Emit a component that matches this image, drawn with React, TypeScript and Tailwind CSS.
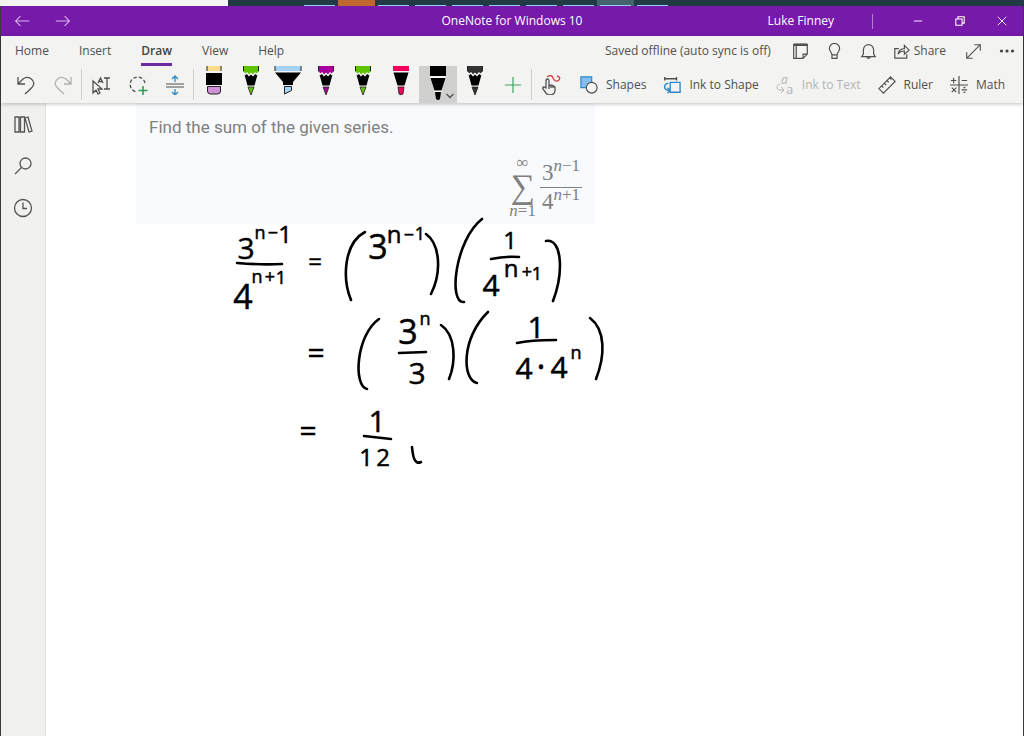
import React, { useState } from "react";

type Glyph = { t: string; x: number; y: number; size: number };

type PenKind = "eraser" | "pencil" | "brush" | "marker";

type Pen = { name: string; kind: PenKind; color: string };

const TABS = ["Home", "Insert", "Draw", "View", "Help"];

const PENS: Pen[] = [
    { name: "Eraser", kind: "eraser", color: "#cf8fd6" },
    { name: "Green pencil", kind: "pencil", color: "#5fc400" },
    { name: "Highlighter", kind: "brush", color: "#a5d3f7" },
    { name: "Purple pencil", kind: "pencil", color: "#a8009a" },
    { name: "Lime pencil", kind: "pencil", color: "#5fc400" },
    { name: "Pink pen", kind: "marker", color: "#f5005c" },
    { name: "Black pen", kind: "marker", color: "#000000" },
    { name: "Gray pencil", kind: "pencil", color: "#333333" },
];

// x is the centre of the character, y its baseline
const NOTES: Glyph[] = [
    { t: "3", x: 246, y: 259, size: 30 },
    { t: "n", x: 260, y: 239, size: 18 },
    { t: "−", x: 273, y: 239, size: 18 },
    { t: "1", x: 285, y: 243, size: 24 },
    { t: "4", x: 243, y: 309, size: 34 },
    { t: "n", x: 257, y: 283, size: 18 },
    { t: "+", x: 270, y: 283, size: 18 },
    { t: "1", x: 281, y: 284, size: 18 },
    { t: "=", x: 315, y: 270, size: 24 },
    { t: "3", x: 378, y: 259, size: 34 },
    { t: "n", x: 394, y: 243, size: 24 },
    { t: "−", x: 409, y: 241, size: 18 },
    { t: "1", x: 420, y: 240, size: 18 },
    { t: "1", x: 510, y: 249, size: 24 },
    { t: "4", x: 491, y: 296, size: 30 },
    { t: "n", x: 511, y: 277, size: 24 },
    { t: "+", x: 527, y: 278, size: 18 },
    { t: "1", x: 537, y: 280, size: 18 },
    { t: "=", x: 316, y: 363, size: 30 },
    { t: "3", x: 408, y: 344, size: 34 },
    { t: "n", x: 425, y: 325, size: 18 },
    { t: "3", x: 417, y: 384, size: 30 },
    { t: "1", x: 536, y: 338, size: 30 },
    { t: "4", x: 524, y: 379, size: 30 },
    { t: "·", x: 541, y: 379, size: 34 },
    { t: "4", x: 559, y: 378, size: 30 },
    { t: "n", x: 576, y: 359, size: 18 },
    { t: "=", x: 308, y: 441, size: 30 },
    { t: "1", x: 377, y: 432, size: 30 },
    { t: "1", x: 366, y: 466, size: 24 },
    { t: "2", x: 383, y: 466, size: 24 },
];

// brackets, fraction bars and the stroke still being drawn
const STROKES = [
    "M237 263Q260 265 282 264",
    "M365 232C344 243 342 278 351 300",
    "M426 234C440 244 442 272 431 294",
    "M482 219C455 240 448 304 464 302",
    "M491 259Q505 256 519 257",
    "M546 241C562 238 564 272 553 301",
    "M379 319C356 335 353 386 367 389",
    "M399 353L426 352",
    "M441 325C456 335 456 362 449 379",
    "M488 312C461 338 462 380 477 383",
    "M517 343Q530 340 556 340",
    "M590 318C606 330 605 356 596 379",
    "M364 436L391 439",
    "M412 447C413 458 415 465 421 462",
];

function Line({ children, size = 20, w = 1.3, className = "" }: { children: React.ReactNode; size?: number; w?: number; className?: string }) {
    return (
        <svg width={size} height={size} viewBox="0 0 20 20" fill="none" stroke="currentColor" strokeWidth={w} className={"shrink-0 " + className} aria-hidden="true">
            {children}
        </svg>
    );
}

function PenIcon({ kind, color }: { kind: PenKind; color: string }) {
    if (kind === "eraser") {
        return (
            <svg width="16" height="30" viewBox="0 0 16 30" aria-hidden="true">
                <rect x="1" y="0" width="14" height="5" fill="#f7dc8b" />
                <path d="M1 0V5M15 0V5" stroke="#222" />
                <rect x="0" y="7" width="16" height="12" fill="#000" />
                <path d="M1.500 20.500H14.500V25Q14.500 28 11.500 28H4.500Q1.500 28 1.500 25Z" fill={color} stroke="#222" />
            </svg>
        );
    }
    if (kind === "brush") {
        return (
            <svg width="28" height="30" viewBox="0 0 28 30" aria-hidden="true">
                <rect x="1" y="0" width="26" height="5" fill={color} />
                <path d="M1 0V5M27 0V5" stroke="#222" />
                <path d="M1 6.500H27L19 16V19H9V16Z" fill="#000" />
                <path d="M10.500 20.500H17.500V24.500L10.500 28Z" fill={color} stroke="#222" />
            </svg>
        );
    }
    if (kind === "pencil") {
        return (
            <svg width="16" height="30" viewBox="0 0 16 30" aria-hidden="true">
                <path d="M.5 5L4.500 19.500H11.500L15.500 5Z" fill="#000" />
                <path d="M.5 0H15.500V5L14 8L12 6.500L10 9L8 7L6 9L4 6.500L2 8L.5 5Z" fill={color} />
                <path d="M.5 6L2 8.500L4 7L6 9.500L8 7.500L10 9.500L12 7L14 8.500L15.500 6" fill="none" stroke="#fff" strokeWidth="1.300" />
                <path d="M.5 0V5M15.500 0V5" stroke="#222" />
                <path d="M5 21H11L8 29Z" fill={color} stroke="#222" strokeWidth=".8" />
            </svg>
        );
    }
    return (
        <svg width="16" height="30" viewBox="0 0 16 30" aria-hidden="true">
            <rect x="0" y="0" width="16" height="5" fill={color} />
            <path d="M.5 6.500H15.500L11.500 19.500H4.500Z" fill="#000" />
            <path d="M5 21H11L10 28Q8 29.500 6 28Z" fill={color} stroke="#222" strokeWidth=".8" />
        </svg>
    );
}

function BlackPenIcon() {
    return (
        <svg width="16" height="36" viewBox="0 0 16 36" aria-hidden="true">
            <path d="M0 0H16V10H0ZM.5 12H15.500L11.500 24.500H4.500ZM5 26H11L10 33Q8 35 6 33Z" fill="#000" />
            <path d="M0 11H16M4 25.300H12" stroke="#fff" strokeWidth="1.300" />
        </svg>
    );
}

function Taskbar() {
    const marks = Array.from({ length: 10 }, (_, i) => i);
    return (
        <div className="flex h-[6px] w-full bg-[#213a43]">
            <div className="w-[228px] bg-[#f4f4f4]" />
            <div className="ml-[73px] flex">
                {marks.map((i) => (
                    <div key={i} className={"flex w-[37px] flex-col justify-end px-[3px] " + (i === 1 ? "bg-[#c0662f]" : i === 8 ? "bg-[#45636d]" : "")}>
                        <div className={"h-px " + (i === 1 ? "" : "bg-[#8fd0f5]")} />
                    </div>
                ))}
            </div>
        </div>
    );
}

function TitleBar() {
    return (
        <header className="grid h-[30px] grid-cols-[1fr_auto_1fr] items-center bg-[#7719aa] text-xs text-white">
            <div className="flex text-[#dcb8ee]">
                <button aria-label="Back" className="flex w-[41px] justify-center">
                    <Line size={16}><path d="M19 10H2M8 4L2 10L8 16" /></Line>
                </button>
                <button aria-label="Forward" className="flex w-[41px] justify-center">
                    <Line size={16}><path d="M1 10H18M12 4L18 10L12 16" /></Line>
                </button>
            </div>
            <h1>OneNote for Windows 10</h1>
            <div className="flex items-center justify-end">
                <span>Luke Finney</span>
                <span className="ml-[38px] mr-[24px] h-[15px] w-px bg-[#b27fd0]" />
                <button aria-label="Minimize" className="flex w-[42px] justify-center">
                    <Line size={14}><path d="M4 10H16" /></Line>
                </button>
                <button aria-label="Restore" className="flex w-[42px] justify-center">
                    <Line size={14} w={1.5}><path d="M4 7H13V16H4ZM7 7V4H16V13H13" /></Line>
                </button>
                <button aria-label="Close" className="flex w-[42px] justify-center">
                    <Line size={14}><path d="M4 4L16 16M16 4L4 16" /></Line>
                </button>
            </div>
        </header>
    );
}

function TabRow({ tab, onPick }: { tab: string; onPick: (t: string) => void }) {
    return (
        <div className="flex h-[30px] items-center justify-between pl-[14px] pr-[8px]">
            <nav className="flex h-full gap-[30px]">
                {TABS.map((t) => (
                    <button
                        key={t}
                        onClick={() => onPick(t)}
                        className={"h-full border-b-[3px] pt-[2px] " + (t === tab ? "border-[#6b2a9e] font-semibold text-[#444]" : "border-transparent")}
                    >
                        {t}
                    </button>
                ))}
            </nav>
            <div className="flex items-center">
                <span>Saved offline (auto sync is off)</span>
                <button aria-label="Feed" className="ml-[21px]">
                    <Line size={17} w={1.4}><path d="M2 2H18V13L13 18H2ZM18 13H13V18M5 2V18" /><path d="M2 2H18" strokeWidth="3" /></Line>
                </button>
                <button aria-label="Tell me" className="ml-[17px]">
                    <Line size={17} w={1.4}><path d="M7 14C7 11 4 10 4 6.500A6 6 0 0 1 16 6.500C16 10 13 11 13 14ZM7 14V18H13V14" /></Line>
                </button>
                <button aria-label="Notifications" className="ml-[17px]">
                    <Line size={17} w={1.4}><path d="M2 16H18L16 13V8A6 6 0 0 0 4 8V13ZM8 16A2 2 0 0 0 12 16" /></Line>
                </button>
                <button className="ml-[17px] flex items-center gap-1">
                    <Line size={16} w={1.5}><path d="M6 7H1V19H16V14M5 14C6 9 9 7 13 7V3L19 9L13 14V10C10 10 7 11 5 14Z" /></Line>
                    Share
                </button>
                <button aria-label="Full screen" className="ml-[19px]">
                    <Line size={17}><path d="M2 18L18 2M11 2H18V9M2 11V18H9" /></Line>
                </button>
                <button aria-label="More" className="ml-[17px]">
                    <svg width="16" height="16" viewBox="0 0 16 16" fill="#444" aria-hidden="true">
                        <circle cx="2.500" cy="8" r="1.600" /><circle cx="8" cy="8" r="1.600" /><circle cx="13.500" cy="8" r="1.600" />
                    </svg>
                </button>
            </div>
        </div>
    );
}

function Tool({ label, children }: { label: string; children: React.ReactNode }) {
    return <button aria-label={label} className="flex w-[37px] shrink-0 items-center justify-center">{children}</button>;
}

function Divider() {
    return <div className="h-[31px] w-px shrink-0 self-center bg-[#cfcfcf]" />;
}

function DrawTools() {
    const [active, setActive] = useState(6);

    return (
        <div className="flex h-[37px] pl-[6px]">
            <Tool label="Undo">
                <Line><path d="M2 2V9H9M2 9L7 4C12 0 20 5 17 11C16 13 12 16 9 19" /></Line>
            </Tool>
            <Tool label="Redo">
                <Line className="text-[#b0b0b0]"><path d="M18 2V9H11M18 9L13 4C8 0 0 5 3 11C4 13 8 16 11 19" /></Line>
            </Tool>
            <Divider />
            <Tool label="Select objects or type">
                <Line><path d="M2 6V18L5 15L7 19L9 18L7 14H11ZM7 8L9.500 3L12 8M8 6.500H11M13 3H19M13 14H19M16 3V14" /></Line>
            </Tool>
            <Tool label="Lasso select">
                <Line><path d="M17 8A7.500 7.500 0 1 0 9 17" strokeDasharray="3.500 2" /><path d="M15 11V20M10.500 15.500H19.500" stroke="#2e9b57" strokeWidth="1.600" /></Line>
            </Tool>
            <Tool label="Insert or remove extra space">
                <Line><path d="M1 9H19M1 12H19" strokeWidth="1.200" /><path d="M10 7V1M7 4L10 1L13 4M10 14V20M7 17L10 20L13 17" stroke="#2b88c8" /></Line>
            </Tool>
            <Divider />
            <div className="ml-px grid w-[299px] shrink-0 grid-cols-8">
                {PENS.map((p, i) => (
                    <button
                        key={p.name}
                        aria-label={p.name}
                        aria-pressed={i === active}
                        onClick={() => setActive(i)}
                        className={"relative flex items-start justify-center " + (i === active ? "bg-[#d0d0ce]" : "")}
                    >
                        {p.name === "Black pen" ? <BlackPenIcon /> : <PenIcon kind={p.kind} color={p.color} />}
                        {i === active && (
                            <Line size={10} w={2.5} className="absolute bottom-[2px] right-[2px]"><path d="M3 6L10 13L17 6" /></Line>
                        )}
                    </button>
                ))}
            </div>
            <Tool label="Add pen">
                <Line size={18}><path d="M10 1V19M1 10H19" stroke="#3aa160" /></Line>
            </Tool>
            <Divider />
            <Tool label="Draw with touch">
                <Line><path d="M8 14V6Q8 4 6.500 4Q5 4 5 6V13L3 12Q1 12 2 14L5 18Q6 20 9 20Q14 20 14 15V12Q12 10 8 10M10 10V13M12 11V13" /><path d="M6 2Q11 -1 12 3Q14 8 18 5Q20 2 16 1" stroke="#d83b3b" /></Line>
            </Tool>
            <div className="flex items-center gap-[17px] pl-[11px] whitespace-nowrap">
                <button className="flex items-center gap-2">
                    <Line size={18}><path d="M1 1H13V13H1Z" fill="#83beec" stroke="#2b88c8" /><circle cx="13" cy="13" r="6" fill="#f3f3f2" /></Line>
                    Shapes
                </button>
                <button className="flex items-center gap-2">
                    <Line size={18}><path d="M2 3H15M2 1V5M15 1V5" strokeWidth="1.600" /><path d="M8 7H19V18H8ZM6 8C1 9 0 14 5 16H8M5 13L8 16L5 19" stroke="#2b88c8" strokeWidth="1.500" /></Line>
                    Ink to Shape
                </button>
                <button className="flex items-center gap-2 text-[#b4b4b4]" disabled>
                    <svg width="18" height="32" viewBox="0 0 18 32" fill="currentColor" aria-hidden="true">
                        <text x="5" y="15" fontSize="12" fontStyle="italic">a</text>
                        <text x="10" y="25" fontSize="13">a</text>
                        <path d="M4 15C0 16 0 21 4 21H7M5 18L8 21L5 24" fill="none" stroke="currentColor" />
                    </svg>
                    Ink to Text
                </button>
                <button className="flex items-center gap-2">
                    <Line size={18}><path d="M1 14L14 1L19 6L6 19ZM4 11L6 13M7 8L9 10M10 5L12 7M13 2L15 4" /></Line>
                    Ruler
                </button>
                <button className="flex items-center gap-2">
                    <Line size={18}><path d="M10 0V20M0 10H20M1 5H7M4 2V8M13 5H19M2 13L7 18M7 13L2 18M13 15.500H19" /><path d="M16 12V13.500M16 17.500V19" strokeWidth="2" /></Line>
                    Math
                </button>
            </div>
        </div>
    );
}

function SideRail() {
    return (
        <aside className="flex w-[45px] shrink-0 flex-col items-center gap-[22px] border-r border-[#e4e4e4] bg-[#f1f1f0] pt-[11px] text-[#555]">
            <button aria-label="Notebooks">
                <Line><path d="M2 3H6V18H2ZM7.500 3H11.500V18H7.500ZM12 4L15 3L19 17L16 18Z" /></Line>
            </button>
            <button aria-label="Search">
                <Line><circle cx="12.500" cy="7.500" r="5.500" /><path d="M8.500 11.500L2 18" /></Line>
            </button>
            <button aria-label="Recent notes">
                <Line><circle cx="10" cy="10" r="8.500" /><path d="M10 4.500V10.500H14" /></Line>
            </button>
        </aside>
    );
}

function Problem() {
    return (
        <section className="ml-[90px] flex h-[121px] w-[459px] flex-col bg-[#f8fafe] pl-[13px] pr-[13px] pt-[12px] text-[#808080]">
            <p className="font-[Roboto,sans-serif] text-[17px] leading-6">Find the sum of the given series.</p>
            <div className="mt-[16px] flex items-center justify-end gap-1 font-['Liberation_Serif',serif]">
                <div className="flex flex-col items-center text-[17px] leading-4">
                    <span>∞</span>
                    <span className="text-[34px] leading-[32px]">∑</span>
                    <span><i>n</i>=1</span>
                </div>
                <div className="text-[23px] leading-7">
                    <div className="border-b border-[#808080] px-[2px]">3<sup className="text-[17px]"><i>n</i>−1</sup></div>
                    <div className="px-[2px]">4<sup className="text-[17px]"><i>n</i>+1</sup></div>
                </div>
            </div>
        </section>
    );
}

function Ink() {
    return (
        <svg width="400" height="260" viewBox="220 214 400 260" className="absolute left-[174px] top-[111px]" role="img" aria-label="Handwritten working">
            <g fill="none" stroke="#000" strokeWidth="2.600" strokeLinecap="round">
                {STROKES.map((d) => <path key={d} d={d} />)}
            </g>
            <g fill="#000" stroke="#000" strokeWidth=".5" strokeLinejoin="round" textAnchor="middle" fontFamily="Open Sans, sans-serif">
                {NOTES.map((g, i) => (
                    <text key={i} x={g.x} y={g.y} fontSize={g.size}>{g.t}</text>
                ))}
            </g>
        </svg>
    );
}

function App() {
    const [tab, setTab] = useState("Draw");

    return (
        <div className="flex min-h-screen flex-col font-['Open_Sans',sans-serif]">
            <Taskbar />
            <div className="flex flex-1 flex-col border-x border-[#3a3a3a]">
                <TitleBar />
                <div className="z-10 bg-[#f3f3f2] text-xs text-[#505050] shadow-[0_1px_4px_rgba(0,0,0,0.25)]">
                    <TabRow tab={tab} onPick={setTab} />
                    <DrawTools />
                </div>
                <div className="flex flex-1">
                    <SideRail />
                    <main className="relative flex-1 bg-white">
                        <Problem />
                        <Ink />
                    </main>
                </div>
            </div>
        </div>
    );
}

export default App;
